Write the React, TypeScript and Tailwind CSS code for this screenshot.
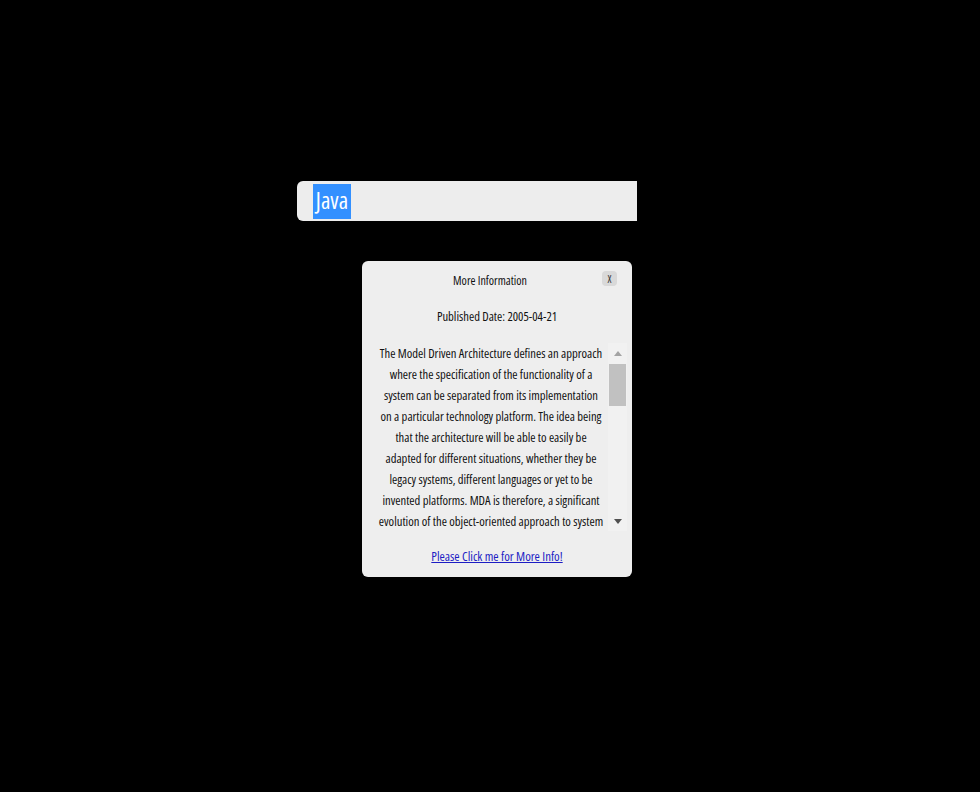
import React from "react";

// first lines are broken by hand so the box wraps like the original
const summaryLines = [
  "The Model Driven Architecture defines an approach",
  "where the specification of the functionality of a",
  "system can be separated from its implementation",
  "on a particular technology platform. The idea being",
  "that the architecture will be able to easily be",
  "adapted for different situations, whether they be",
  "legacy systems, different languages or yet to be",
  "invented platforms. MDA is therefore, a significant",
  "evolution of the object-oriented approach to system",
];

const summaryRest = "development, and a new way of looking at Java.";

function Arrow({ up, color }: { up?: boolean; color: string }) {
  return (
    <svg width="8" height="5" viewBox="0 0 8 5" className="block">
      <path d={up ? "M0 5 L4 0 L8 5 Z" : "M0 0 L4 5 L8 0 Z"} fill={color} />
    </svg>
  );
}

function ScrollTrack() {
  return (
    <div className="flex w-[19px] flex-col bg-[#f1f1f1]">
      <div className="flex h-5 items-center justify-center">
        <Arrow up color="#a3a3a3" />
      </div>
      <div className="flex-1 px-px pt-px">
        <div className="h-[42px] bg-[#c1c1c1]" />
      </div>
      <div className="flex h-5 items-center justify-center">
        <Arrow color="#505050" />
      </div>
    </div>
  );
}

function InfoModal() {
  return (
    <div className="ml-[362px] mt-10 flex h-[316px] w-[270px] flex-col rounded-md bg-[#eeeeee] pt-[10px] text-[#111]">
      <div className="flex items-start pl-4 pr-[15px]">
        <h2 className="flex-1 text-center text-[12px] leading-5">
          More Information
        </h2>
        <button className="flex h-[15px] w-[15px] items-center justify-center rounded-sm bg-[#d9d9d9] text-[10px] leading-none text-[#333]">
          X
        </button>
      </div>

      <p className="mt-4 text-center text-[12.6px] leading-5">
        Published Date: 2005-04-21
      </p>

      <div className="mt-4 ml-3 mr-[5px] flex h-[188px]">
        <div className="flex-1 overflow-hidden">
          <p className="text-center text-[12.6px] leading-[21px]">
            {summaryLines.map((line) => (
              <React.Fragment key={line}>
                <span className="whitespace-nowrap">{line}</span>
                <br />
              </React.Fragment>
            ))}
            {summaryRest}
          </p>
        </div>
        <ScrollTrack />
      </div>

      <div className="mt-[15px] text-center text-[12.8px] leading-5">
        <a href="#" className="text-[#1c1cc4] underline">
          Please Click me for More Info!
        </a>
      </div>
    </div>
  );
}

export default function App() {
  return (
    <div className="min-h-screen bg-black pt-[181px] font-['Open_Sans',sans-serif] font-stretch-condensed">
      <div className="ml-[297px] flex h-10 w-[340px] items-center rounded-l-md bg-[#ededed] pl-4">
        <span className="flex h-[35px] w-[38px] items-center justify-center bg-[#3390ff] pb-0.5 text-[23px] text-white">
          Java
        </span>
      </div>
      <InfoModal />
    </div>
  );
}
